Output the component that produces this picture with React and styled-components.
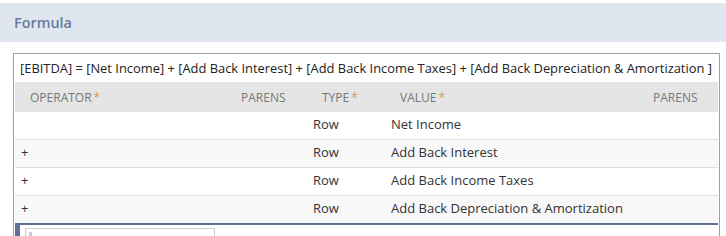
import React from 'react';
import styled, { createGlobalStyle } from 'styled-components';

const GlobalStyle = createGlobalStyle`
	body {
		margin: 0;
		background: #fff;
		font-family: "Open Sans", "Liberation Sans", sans-serif;
		color: #262626;
	}
`;

const Page = styled.div`
	padding-top: 3px;
	width: 726px;
	height: 236px;
	overflow: hidden;
`;

const SectionHeader = styled.div`
	height: 39px;
	background: #e0e6ef;
	display: flex;
	align-items: center;
	padding-left: 14px;
	font-size: 14.4px;
	font-weight: 600;
	color: #667b9b;
`;

const Panel = styled.div`
	margin: 11px 6px 0 13px;
	border: 1px solid #a0a0a0;
	border-bottom: none;
	padding: 0 1px;
`;

const FormulaLine = styled.div`
	height: 28px;
	display: flex;
	align-items: center;
	padding-left: 5px;
	padding-bottom: 1px;
	box-sizing: border-box;
	font-size: 12.9px;
	color: #222;
	white-space: nowrap;
`;

const cols = '211px 81px 78px 253px 1fr';

const HeadRow = styled.div`
	display: grid;
	grid-template-columns: ${cols};
	height: 30px;
	align-items: center;
	background: #e5e5e5;
`;

const HeadCell = styled.div`
	padding-left: 15px;
	font-size: 12px;
	color: #777;
	text-transform: uppercase;
`;

const Req = styled.span`
	color: #d39c4f;
	margin-left: 2px;
`;

const Row = styled.div`
	box-sizing: border-box;
	display: grid;
	grid-template-columns: ${cols};
	height: 28px;
	padding-bottom: 3px;
	align-items: center;
	background: ${({ $alt }) => ($alt ? '#f8f8f8' : '#fff')};
	border-bottom: 1px solid #ddd;
	font-size: 13px;
	color: #333;

	&:last-of-type {
		height: 29px;
		border-bottom: 2px solid #607193;
	}
`;

const Cell = styled.div`
	padding-left: 6px;
`;

const EditRow = styled.div`
	display: flex;
	height: 20px;
	border-left: 5px solid #607193;
	padding: 3px 0 0 5px;
`;

const EditInput = styled.div`
	width: 185px;
	height: 12px;
	border: 1px solid #ccc;
	border-bottom: none;
	padding: 3px 0 0 3px;

	&::before {
		content: '';
		display: block;
		width: 3px;
		height: 10px;
		background: #ccc;
	}
`;

const rows = [
	{ op: '', value: 'Net Income' },
	{ op: '+', value: 'Add Back Interest' },
	{ op: '+', value: 'Add Back Income Taxes' },
	{ op: '+', value: 'Add Back Depreciation & Amortization' },
];

const App = () => {
	return (
		<Page>
			<GlobalStyle />
			<SectionHeader>Formula</SectionHeader>
			<Panel>
				<FormulaLine>
					[EBITDA] = [Net Income] + [Add Back Interest] + [Add Back Income Taxes] + [Add Back Depreciation &amp; Amortization ]
				</FormulaLine>
				<HeadRow>
					<HeadCell>Operator<Req>*</Req></HeadCell>
					<HeadCell>Parens</HeadCell>
					<HeadCell>Type<Req>*</Req></HeadCell>
					<HeadCell>Value<Req>*</Req></HeadCell>
					<HeadCell>Parens</HeadCell>
				</HeadRow>
				<div>
					{rows.map((r, i) => (
						<Row key={i} $alt={i % 2 === 1}>
							<Cell>{r.op}</Cell>
							<Cell />
							<Cell>Row</Cell>
							<Cell>{r.value}</Cell>
							<Cell />
						</Row>
					))}
				</div>
				<EditRow>
					<EditInput />
				</EditRow>
			</Panel>
		</Page>
	);
};

export default App;
